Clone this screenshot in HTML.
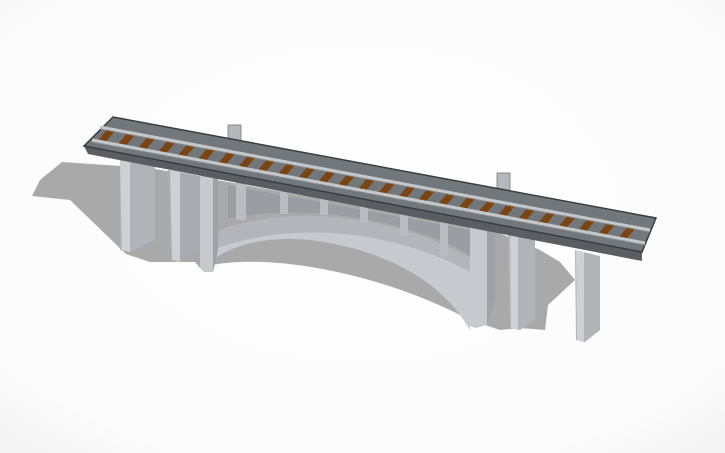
<!DOCTYPE html>
<html><head><style>
html,body{margin:0;padding:0;width:725px;height:453px;overflow:hidden;background:#fff}
</style></head><body>
<svg width="725" height="453" viewBox="0 0 725 453" xmlns="http://www.w3.org/2000/svg">
<defs>
<radialGradient id="bg" cx="50%" cy="45%" r="80%">
<stop offset="0" stop-color="#ffffff"/><stop offset="0.75" stop-color="#fbfbfb"/><stop offset="1" stop-color="#f0f0f0"/>
</radialGradient>
</defs>
<rect width="725" height="453" fill="url(#bg)"/>
<!-- shadow -->
<path d="M62,162 L40,180 L32,196 L70,200 L126,254 L150,262 L175,262 L195,262 L200,268 C260,250 380,272 470,320 L500,330 L520,328 L545,330 L548,305 L575,280 L560,262 L540,250 L480,225 L300,195 L150,168 Z" fill="#a9a9a9"/>
<!-- arch underside -->
<path d="M228,185 L470,230 L470,255 C400,215 300,205 228,218 Z" fill="#9a9da1"/>
<path d="M215,232 C280,205 390,212 470,258 L470,330 C445,285 390,250 310,240 C265,236 235,245 215,258 Z" fill="#c6c9cd"/>
<path d="M215,232 C280,205 390,212 470,258 L470,272 C390,228 290,222 218,248 Z" fill="#b2b6bb"/>
<!-- spandrel posts -->
<g fill="#b9bdc2">
<rect x="236" y="180" width="10" height="40"/><rect x="280" y="188" width="8" height="26"/><rect x="320" y="195" width="8" height="20"/><rect x="360" y="202" width="8" height="20"/><rect x="400" y="210" width="8" height="26"/><rect x="440" y="217" width="8" height="40"/>
</g>
<!-- piers -->
<g>
<path d="M120,160 L155,166 L155,240 L130,252 L120,250 Z" fill="#b0b4b9"/>
<path d="M120,160 L130,162 L130,252 L122,250 Z" fill="#cdd0d4"/>
<path d="M168,170 L200,176 L200,248 L180,262 L170,260 Z" fill="#a8acb1"/>
<path d="M170,170 L180,172 L180,262 L172,260 Z" fill="#cdd0d4"/>
<path d="M200,160 L213,162 L213,272 L204,272 L200,268 Z" fill="#c6c9cd"/>
<path d="M213,162 L218,165 L218,250 L213,272 Z" fill="#9ea2a7"/>
<path d="M470,212 L487,215 L487,325 L476,328 L470,326 Z" fill="#c6c9cd"/>
<path d="M487,215 L495,218 L495,300 L487,325 Z" fill="#9ea2a7"/>
<path d="M508,230 L535,236 L535,320 L520,330 L510,328 Z" fill="#b0b4b9"/>
<path d="M510,230 L518,232 L518,330 L511,328 Z" fill="#cdd0d4"/>
<path d="M575,250 L600,256 L600,330 L585,342 L576,340 Z" fill="#b0b4b9"/>
<path d="M576,250 L584,252 L584,342 L577,340 Z" fill="#cdd0d4"/>
</g>
<!-- posts on top -->
<rect x="228" y="125" width="13" height="22" fill="#b4b8bd" stroke="#777" stroke-width="0.8"/>
<rect x="497" y="173" width="13" height="22" fill="#b4b8bd" stroke="#777" stroke-width="0.8"/>
<!-- deck -->
<path d="M84,146 L642,252 L642,261 L88,154 Z" fill="#5a5e62"/>
<path d="M113,117 L656,218 L642,252 L84,146 Z" fill="#72777b" stroke="#3a3d40" stroke-width="1.5"/>
<!-- sleepers -->
<g stroke="#7a4512" stroke-width="7">
<line x1="101" y1="142" x2="112" y2="129"/><line x1="121" y1="146" x2="132" y2="133"/><line x1="141" y1="150" x2="152" y2="137"/><line x1="161" y1="154" x2="172" y2="141"/><line x1="181" y1="157" x2="192" y2="144"/><line x1="201" y1="161" x2="212" y2="148"/><line x1="221" y1="165" x2="232" y2="152"/><line x1="241" y1="169" x2="252" y2="156"/><line x1="261" y1="172" x2="272" y2="159"/><line x1="281" y1="176" x2="292" y2="163"/><line x1="301" y1="180" x2="312" y2="167"/><line x1="321" y1="184" x2="332" y2="171"/><line x1="341" y1="187" x2="352" y2="174"/><line x1="361" y1="191" x2="372" y2="178"/><line x1="381" y1="195" x2="392" y2="182"/><line x1="401" y1="199" x2="412" y2="186"/><line x1="421" y1="202" x2="432" y2="189"/><line x1="441" y1="206" x2="452" y2="193"/><line x1="461" y1="210" x2="472" y2="197"/><line x1="481" y1="214" x2="492" y2="201"/><line x1="501" y1="217" x2="512" y2="204"/><line x1="521" y1="221" x2="532" y2="208"/><line x1="541" y1="225" x2="552" y2="212"/><line x1="561" y1="229" x2="572" y2="216"/><line x1="581" y1="232" x2="592" y2="219"/><line x1="601" y1="236" x2="612" y2="223"/><line x1="621" y1="240" x2="632" y2="227"/>
</g>
<!-- rails -->
<line x1="100" y1="127" x2="650" y2="230" stroke="#c5c8cb" stroke-width="3"/>
<line x1="92" y1="140" x2="645" y2="243" stroke="#c5c8cb" stroke-width="3"/>
<line x1="100" y1="129" x2="650" y2="232" stroke="#8d9195" stroke-width="0.8"/>
<line x1="92" y1="142" x2="645" y2="245" stroke="#8d9195" stroke-width="0.8"/>
</svg>
</body></html>
